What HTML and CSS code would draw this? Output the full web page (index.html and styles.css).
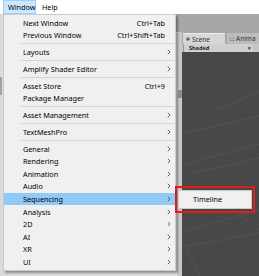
FILE: index.html
```html
<!DOCTYPE html>
<html>
<head>
<meta charset="utf-8">
<link rel="stylesheet" href="styles.css">
</head>
<body>
<div class="app">
  <div class="menubar">
    <span class="mb-item mb-active">Window</span>
    <span class="mb-item">Help</span>
  </div>
  <div class="workspace">
    <div class="leftpanel"><div class="lp-scroll"></div></div>
    <div class="scenepanel">
      <div class="toolbar"></div>
      <div class="scene-body">
        <div class="sidestrip"><div class="ss-thumb"></div></div>
        <div class="scene-col">
          <div class="tabs">
            <div class="tab tab-active"><span class="tab-icon">#</span>Scene</div>
            <div class="tab"><span class="tab-icon">&#8759;</span>Anima</div>
          </div>
          <div class="shaded-row">
            <div class="dropdown"><span>Shaded</span><span class="dd-arrow">&#9662;</span></div>
          </div>
          <div class="viewport">
            <svg class="grid" viewBox="0 0 77 224" preserveAspectRatio="none" xmlns="http://www.w3.org/2000/svg">
              <g stroke="#575757" stroke-width="0.8" fill="none">
                <line x1="0" y1="82" x2="77" y2="64"/>
                <line x1="0" y1="113" x2="77" y2="92"/>
                <line x1="8" y1="122" x2="77" y2="106"/>
                <line x1="0" y1="180" x2="77" y2="158"/>
                <line x1="0" y1="195" x2="77" y2="181"/>
                <line x1="40" y1="150" x2="77" y2="178"/>
                <line x1="0" y1="188" x2="18" y2="224"/>
                <line x1="30" y1="60" x2="77" y2="40"/>
              </g>
            </svg>
          </div>
        </div>
      </div>
    </div>
  </div>
</div>

<div class="menu">
  <div class="item"><span class="label">Next Window</span><span class="shortcut">Ctrl+Tab</span></div>
  <div class="item"><span class="label">Previous Window</span><span class="shortcut">Ctrl+Shift+Tab</span></div>
  <div class="sep"></div>
  <div class="item"><span class="label">Layouts</span><svg class="arrow" viewBox="0 0 4 6"><polyline points="0.8,0.8 3,3 0.8,5.2"/></svg></div>
  <div class="sep"></div>
  <div class="item"><span class="label">Amplify Shader Editor</span><svg class="arrow" viewBox="0 0 4 6"><polyline points="0.8,0.8 3,3 0.8,5.2"/></svg></div>
  <div class="sep"></div>
  <div class="item"><span class="label">Asset Store</span><span class="shortcut">Ctrl+9</span></div>
  <div class="item"><span class="label">Package Manager</span></div>
  <div class="sep"></div>
  <div class="item"><span class="label">Asset Management</span><svg class="arrow" viewBox="0 0 4 6"><polyline points="0.8,0.8 3,3 0.8,5.2"/></svg></div>
  <div class="sep"></div>
  <div class="item"><span class="label">TextMeshPro</span><svg class="arrow" viewBox="0 0 4 6"><polyline points="0.8,0.8 3,3 0.8,5.2"/></svg></div>
  <div class="sep"></div>
  <div class="item"><span class="label">General</span><svg class="arrow" viewBox="0 0 4 6"><polyline points="0.8,0.8 3,3 0.8,5.2"/></svg></div>
  <div class="item"><span class="label">Rendering</span><svg class="arrow" viewBox="0 0 4 6"><polyline points="0.8,0.8 3,3 0.8,5.2"/></svg></div>
  <div class="item"><span class="label">Animation</span><svg class="arrow" viewBox="0 0 4 6"><polyline points="0.8,0.8 3,3 0.8,5.2"/></svg></div>
  <div class="item"><span class="label">Audio</span><svg class="arrow" viewBox="0 0 4 6"><polyline points="0.8,0.8 3,3 0.8,5.2"/></svg></div>
  <div class="item item-hover"><span class="label">Sequencing</span><svg class="arrow" viewBox="0 0 4 6"><polyline points="0.8,0.8 3,3 0.8,5.2"/></svg></div>
  <div class="item"><span class="label">Analysis</span><svg class="arrow" viewBox="0 0 4 6"><polyline points="0.8,0.8 3,3 0.8,5.2"/></svg></div>
  <div class="item"><span class="label">2D</span><svg class="arrow" viewBox="0 0 4 6"><polyline points="0.8,0.8 3,3 0.8,5.2"/></svg></div>
  <div class="item"><span class="label">AI</span><svg class="arrow" viewBox="0 0 4 6"><polyline points="0.8,0.8 3,3 0.8,5.2"/></svg></div>
  <div class="item"><span class="label">XR</span><svg class="arrow" viewBox="0 0 4 6"><polyline points="0.8,0.8 3,3 0.8,5.2"/></svg></div>
  <div class="item"><span class="label">UI</span><svg class="arrow" viewBox="0 0 4 6"><polyline points="0.8,0.8 3,3 0.8,5.2"/></svg></div>
</div>

<div class="submenu">
  <div class="item sub-item"><span class="label">Timeline</span></div>
</div>
<div class="callout"></div>
</body>
</html>
```

FILE: styles.css
```css
html, body {
  margin: 0;
  padding: 0;
}
body {
  width: 259px;
  height: 276px;
  overflow: hidden;
  position: relative;
  font-family: "Noto Sans", "Open Sans", sans-serif;
  font-size: 7.25px;
  color: #000;
  background: #d6d6d6;
}
.app {
  display: flex;
  flex-direction: column;
  height: 276px;
}
.menubar {
  height: 14px;
  background: #ffffff;
  display: flex;
  align-items: stretch;
  padding-left: 3px;
  gap: 1px;
}
.mb-item {
  display: flex;
  align-items: center;
  padding: 0 4px 0 4px;
  border: 1px solid transparent;
  box-sizing: border-box;
}
.mb-active {
  background: #cce8ff;
  border-color: #99d1ff;
  width: 33px;
}
.workspace {
  flex: 1;
  display: flex;
}
.leftpanel {
  width: 176px;
  background: #dadada;
  position: relative;
}
.lp-scroll {
  position: absolute;
  left: 0;
  top: 63px;
  width: 2px;
  height: 18px;
  background: #a3a3a3;
}
.scenepanel {
  flex: 1;
  display: flex;
  flex-direction: column;
}
.toolbar {
  height: 18px;
  background: #a7a7a7;
}
.scene-body {
  flex: 1;
  display: flex;
}
.sidestrip {
  width: 6px;
  background: #c9c9c9;
  border-left: 1px solid #dedede;
  box-sizing: border-box;
  position: relative;
}
.ss-thumb {
  position: absolute;
  left: 1px;
  top: 58px;
  width: 4px;
  height: 8px;
  background: #8e8e8e;
}
.scene-col {
  flex: 1;
  display: flex;
  flex-direction: column;
}
.tabs {
  height: 12px;
  display: flex;
  background: #a7a7a7;
  align-items: flex-end;
  gap: 2px;
  padding-left: 1px;
}
.tab {
  height: 11px;
  display: flex;
  align-items: center;
  padding: 0 3px;
  font-size: 6.5px;
  color: #333;
  background: #bcbcbc;
  box-sizing: border-box;
}
.tab-active {
  width: 42px;
  background: #d6d6d6;
  border-top: 1px solid #ececec;
}
.tab-icon {
  margin-right: 2px;
  font-size: 6px;
}
.shaded-row {
  height: 8px;
  background: #c4c4c4;
  display: flex;
  padding-left: 1px;
}
.dropdown {
  width: 70px;
  display: flex;
  align-items: center;
  justify-content: space-between;
  padding: 0 2px 0 5px;
  font-size: 5.5px;
  font-weight: bold;
  color: #222;
  background: #d0d0d0;
  border-left: 1px solid #9a9a9a;
  box-sizing: border-box;
}
.dd-arrow {
  font-size: 5px;
  color: #444;
}
.viewport {
  flex: 1;
  background: #484848;
  position: relative;
}
.grid {
  position: absolute;
  inset: 0;
  width: 100%;
  height: 100%;
}

/* Dropdown menu overlay */
.menu {
  position: absolute;
  left: 3px;
  top: 14px;
  width: 173px;
  height: 257px;
  box-sizing: border-box;
  background: #f0f0f0;
  border: 1px solid #cacaca;
  padding: 1.4px 0 1.5px 0;
  box-shadow: 2px 2px 2px rgba(0, 0, 0, 0.35);
}
.item {
  height: 12.6px;
  display: flex;
  align-items: center;
  padding-left: 19px;
  white-space: nowrap;
}
.label {
  flex: 1;
}
.shortcut {
  margin-right: 10px;
}
.arrow {
  width: 4px;
  height: 6px;
  margin-right: 4px;
  fill: none;
  stroke: #555;
  stroke-width: 0.9;
}
.item-hover {
  background: #91c9f7;
}
.sep {
  height: 4.2px;
  display: flex;
  align-items: center;
  margin-left: 17px;
  margin-right: 1px;
}
.sep::before {
  content: "";
  flex: 1;
  height: 1px;
  background: #d4d4d4;
}

/* Submenu */
.submenu {
  position: absolute;
  left: 178px;
  top: 190px;
  width: 74px;
  height: 19px;
  box-sizing: border-box;
  background: #f0f0f0;
  border: 1px solid #cacaca;
  padding-top: 2px;
}
.sub-item {
  padding-left: 14px;
}
.callout {
  position: absolute;
  left: 175px;
  top: 186px;
  width: 80px;
  height: 27px;
  box-sizing: border-box;
  border: 2.5px solid #e41b17;
}
```
